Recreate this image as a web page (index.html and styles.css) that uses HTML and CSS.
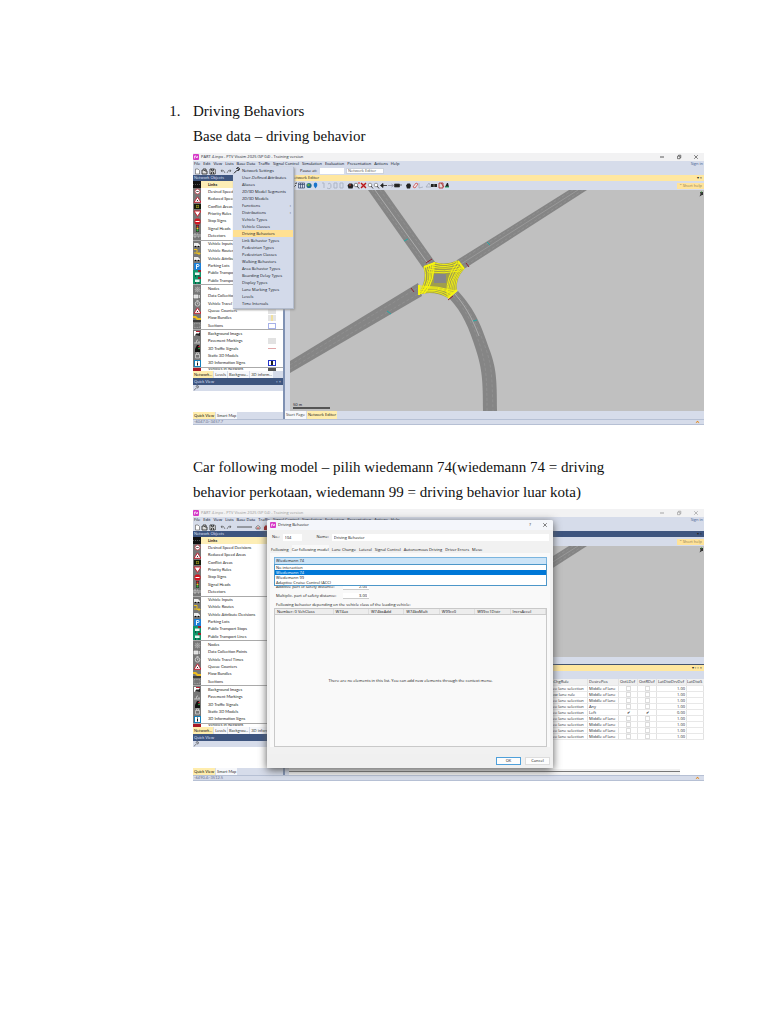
FILE: index.html
```html
<!DOCTYPE html>
<html lang="id">
<head>
<meta charset="utf-8">
<title>Driving Behaviors</title>
<link rel="stylesheet" href="styles.css">
</head>
<body>
<svg class="defs" aria-hidden="true">
  <symbol id="i-logo" viewBox="0 0 6 6"><rect width="6" height="6" rx="1" fill="#d63bc8"/><path d="M1.5 4.5V2h1.5v1.5h1.5V2" fill="none" stroke="#fff" stroke-width=".7"/></symbol>
  <symbol id="i-link" viewBox="0 0 8 7"><rect width="8" height="7" fill="#111"/><path d="M0 3.5h8" stroke="#999" stroke-width=".5" stroke-dasharray="1 1"/></symbol>
  <symbol id="i-speed" viewBox="0 0 8 7"><circle cx="4.5" cy="3.5" r="2.6" fill="#fff" stroke="#b54a52"/><path d="M3.3 3.5h2.4" stroke="#333" stroke-width=".8"/></symbol>
  <symbol id="i-tri" viewBox="0 0 8 7"><path d="M4.5 .8 8 6.300H1z" fill="#fff" stroke="#c02838"/><path d="M4 4.5h1" stroke="#333"/></symbol>
  <symbol id="i-conf" viewBox="0 0 8 7"><path d="M1 1h7v5H1z" fill="#151b0c"/><path d="M3 2h3v3H3z" fill="#aaa81c"/><path d="M3.5 2.5h2v2h-2z" fill="#262f12"/></symbol>
  <symbol id="i-yield" viewBox="0 0 8 7"><path d="M1 1h7L4.500 6.500z" fill="#fff" stroke="#c8202c"/></symbol>
  <symbol id="i-stop" viewBox="0 0 8 7"><path d="M3 .5h3l1.500 1.500v3L6 6.500H3L1.500 5V2z" fill="#d01822"/><path d="M2.500 3.500h4" stroke="#fff"/></symbol>
  <symbol id="i-signal" viewBox="0 0 8 7"><rect x="3" width="3" height="7" fill="#333"/><circle cx="4.500" cy="1.500" r="1" fill="#e02525"/><circle cx="4.500" cy="3.500" r="1" fill="#f0cf25"/><circle cx="4.500" cy="5.500" r="1" fill="#32b745"/></symbol>
  <symbol id="i-det" viewBox="0 0 8 7"><path d="M1 2h2v3H1zM4 2h1v3h1M7 2v3" fill="none" stroke="#ddd" stroke-width=".7"/></symbol>
  <symbol id="i-car" viewBox="0 0 8 7"><path d="M1 2h4l2 2v1H1z" fill="#eee"/><circle cx="2.500" cy="5.500" r=".7"/><circle cx="5.500" cy="5.500" r=".7"/></symbol>
  <symbol id="i-route" viewBox="0 0 8 7"><path d="M1 1.500h3v4h3M5.500 4l1.500 1.500L5.500 7M1 5h3" fill="none" stroke="#edc21e"/></symbol>
  <symbol id="i-park" viewBox="0 0 8 7"><rect x="1" width="7" height="7" fill="#1c7fd6"/><path d="M3.500 6V1.500H5q1 0 1 1t-1 1H3.500" fill="none" stroke="#fff" stroke-width=".9"/></symbol>
  <symbol id="i-bus" viewBox="0 0 8 7"><rect width="8" height="7" fill="#119469"/><path d="M2 2.500h4.500V5H2z" fill="#e8f5ef"/><path d="M5 0h3v2H5z" fill="#94222b"/><path d="M2 6h1M5.500 6h1" stroke="#111"/></symbol>
  <symbol id="i-node" viewBox="0 0 8 7"><path d="M2 1l5 5M7 1 2 6M1.500 3.500h6M4.500.5v6" stroke="#bbb" stroke-width=".5"/><circle cx="4.500" cy="3.500" r="2" fill="none" stroke="#bbb" stroke-width=".5"/></symbol>
  <symbol id="i-data" viewBox="0 0 8 7"><path d="M1 2h4v3H1zM6.500 2v3" fill="#ddd" stroke="#eee" stroke-width=".7"/></symbol>
  <symbol id="i-clock" viewBox="0 0 8 7"><circle cx="4.500" cy="3.800" r="2.300" fill="none" stroke="#ddd" stroke-width=".8"/><path d="M4.500 2.500v1.500h1M3.500.5h2" fill="none" stroke="#eee" stroke-width=".6"/></symbol>
  <symbol id="i-flow" viewBox="0 0 8 7"><path d="M0 1h3l2 2h3v2H4L2 3H0z" fill="#edbd20"/><path d="M0 5h8v2H0z" fill="#3b3b3b"/></symbol>
  <symbol id="i-sect" viewBox="0 0 8 7"><path d="M1 1.500h6v4H1z" fill="none" stroke="#bbb" stroke-width=".6" stroke-dasharray="1 .7"/></symbol>
  <symbol id="i-image" viewBox="0 0 8 7"><rect x="1" y="1" width="6" height="5" fill="#fff"/><path d="M1.500 5.500 4 3l1 1 2-2v4z" fill="#222"/><path d="M3 1h4v1H3z" fill="#b82030"/></symbol>
  <symbol id="i-pave" viewBox="0 0 8 7"><path d="M1 5h6M3 5l1-3h1M6 5V3" fill="none" stroke="#ddd" stroke-width=".7"/></symbol>
  <symbol id="i-3ds" viewBox="0 0 8 7"><path d="M2 7V4l2-4h2l1 4v3z" fill="#111"/><circle cx="6" cy="1.500" r=".8" fill="#e23"/><circle cx="6" cy="3.500" r=".8" fill="#3b4"/></symbol>
  <symbol id="i-static" viewBox="0 0 8 7"><path d="M2.500 2.500h4V6h-4zM3.500 2.500V.8h2v1.700" fill="none" stroke="#ddd" stroke-width=".7"/></symbol>
  <symbol id="i-info" viewBox="0 0 8 7"><rect x="1" width="7" height="7" fill="#147fb9"/><rect x="2" y="1" width="5" height="5" fill="#fff"/><path d="M4.500 1.500v1M4.500 3v2.500" stroke="#111"/></symbol>
  <symbol id="i-red" viewBox="0 0 8 7"><path d="M0 0h8v7H0z" fill="#a81a25"/></symbol>
  <symbol id="i-files" viewBox="0 0 24 7"><path d="M2.500 1h2.500l1.500 1.500V6h-4z" fill="#fff" stroke="#555" stroke-width=".6"/><path d="M9 2h2l1 1h2v3H9zM10 1h3v2" fill="#ddd" stroke="#222" stroke-width=".8"/><path d="M17 1h4.500l.7.700V6H17zM18.500 1v1.700h2V1M18.500 6V4h2v2" fill="#fff" stroke="#222" stroke-width=".8"/></symbol>
  <symbol id="i-undo" viewBox="0 0 12 7"><path d="M1 3q3-2 4 2M1 3l1-1.500M1 3l1.500.7M11 3q-3-2-4 2M11 3l-1-1.500M11 3l-1.500.7" fill="none" stroke="#444" stroke-width=".6"/></symbol>
  <symbol id="i-wrench" viewBox="0 0 7 7"><path d="M1 6.300 4 3.300M3.500 2q0-1.500 2-1.400L4.700 1.800l.7.700L6.600 1.500Q6.500 4 4.200 3.500" fill="none" stroke="#222"/></symbol>
  <symbol id="i-min" viewBox="0 0 6 6"><path d="M1 3h4" stroke="#333" stroke-width=".8"/></symbol>
  <symbol id="i-max" viewBox="0 0 6 6"><path d="M1.500 2.200h2.500v2.500H1.500zM2.500 2V1.200h2.300v2.500H4" fill="none" stroke="#333" stroke-width=".6"/></symbol>
  <symbol id="i-close" viewBox="0 0 6 6"><path d="m1.200 1.200 3.600 3.600M4.800 1.200 1.200 4.800" stroke="#333" stroke-width=".6"/></symbol>
  <symbol id="i-pin" viewBox="0 0 6 6"><path d="M2 1h3v3H4L1.500 5.500 2.500 3z" fill="#333"/><path d="M3 1h1" stroke="#3a3"/></symbol>
  <symbol id="i-up" viewBox="0 0 5 5"><path d="M0.500 2.800 2.500 1l2 1.800v1.400l-2-1.800-2 1.800z" fill="#e58a20"/></symbol>
  <symbol id="i-tools" viewBox="0 0 160 9">
    <path d="m4 7 3-3M6 3q0-1 2-1" fill="none" stroke="#222"/><path d="M9.500 2h6v5h-6zM9.500 3.500h6M11.500 2v5M13.500 2v5" fill="none" stroke="#34466a" stroke-width=".7"/>
    <circle cx="20" cy="4.500" r="2.600" fill="#1d6c8b"/><circle cx="19.500" cy="4" r="1.200" fill="#65ac42"/>
    <path d="M26.500 7.500 24.800 5V3q0-1.500 1.700-1.500t1.700 1.500v2z" fill="#1a75cc"/>
    <path d="M33 2h2v5M39 3q3-2 3 2t-4 2M45 2h3v5h-3zM51 2h3v5h-3z" fill="none" stroke="#adb5c5"/>
    <path d="M58.500 4.500 60 2.500h3l1.500 2-1 3h-4z" fill="#222"/><path d="M61 3v2" stroke="#c24332"/>
    <circle cx="67" cy="4" r="1.800" fill="#fff" stroke="#444" stroke-width=".6"/><path d="m68 5 2 2.500" stroke="#333"/><path d="M69 2h2" stroke="#d33"/>
    <rect x="72" y="2" width="5" height="5" fill="#d9c9c3"/><path d="m72 2 5 5m0-5-5 5" stroke="#b9141c" stroke-width="1.300"/>
    <circle cx="81" cy="4" r="1.800" fill="#fff" stroke="#666" stroke-width=".6"/><path d="m82 5 2 2.500" stroke="#444"/>
    <circle cx="87" cy="4" r="1.800" fill="#fff" stroke="#666" stroke-width=".6"/><path d="m88 5 2 2.500" stroke="#444"/>
    <path d="M92 4.500h6M94 2.500l-2.500 2L94 6.500z" stroke="#222" stroke-width=".8" fill="#222"/><path d="M99 4.500h5M102.500 3l2 1.500-2 1.500" stroke="#99a" fill="none"/>
    <path d="M105.500 3h5v3h-5zM110 4h3" fill="#222" stroke="#333" stroke-width=".7"/><path d="M117 4.500 118.500 2.500h2.500l1 2-1 3h-3z" fill="#222"/>
    <path d="m124 6 3-4 2 1-3 4z" fill="#eee" stroke="#c33" stroke-width=".7"/><path d="M130 2v5l4-1M137 6l3-4 2 4z" fill="none" stroke="#a2a9b7" stroke-width=".8"/>
    <path d="M142 3h6v3h-6z" fill="#222"/><path d="M145 3v3" stroke="#bbb" stroke-width=".6"/><path d="M150 2h4v5h-4zM152 2l3 4" fill="#ddd" stroke="#a22" stroke-width=".8"/><path d="m156 6 2-4h1l1 4z" fill="#222"/><path d="M156 6h4" stroke="#2a6"/>
  </symbol>
  <g id="roads">
    <g fill="#858585"><path d="M78 0h16l51 72-12 6z"/><path d="M279 0h18L174 79l-7-9z"/><path d="m0 171 128-78 4 13L0 183z"/><path d="M159 108c14 15 20 30 27 52 6 19 7 30 7 61h14c0-33-1-43-7-60-9-26-14-40-32-60z"/></g>
    <g fill="none" stroke="#a0a0a0" stroke-width=".4"><path d="m85 0 54 75" stroke="#c8c8c8" stroke-width=".6"/><path d="m82 0 54 76M90 0l52 72" stroke-dasharray="3 2"/><path d="M288 0 171 74" stroke="#b8b8b8"/><path d="M283 0 168 72M293 0 173 77" stroke-dasharray="3 2"/><path d="m0 175 129-78M0 179l130-76" stroke-dasharray="3 2"/><path d="M163 106c14 15 22 32 29 56 4 16 5 27 5 59M166 103c14 16 22 34 30 56 6 18 6 29 7 62" stroke-dasharray="3 2"/><path d="M165 104c14 16 20 32 24 42" stroke="#c8c8c8" stroke-width=".6"/></g>
    <path d="M133 77Q138 88 128 105Q143 100 158 108L167 100Q165 89 175 78L168 70Q155 76 145 72Z" fill="#a09e4c"/>
    <g fill="none" stroke="#f8f610" stroke-width=".9"><path d="M134 77q5 13-5 27M136 76q6 13-5 28M138 75q6 14-6 28M140 74q5 15-8 29M142 73q4 16-8 31M144 72q1 18-9 31"/><path d="M129 104q15-6 29 3M130 102q17-5 30 4M130 100q17-4 32 4M130 98q18-2 33 5M130 96q18 0 35 5"/><path d="M158 106q-2-13 11-33M160 105q-2-13 11-30M162 104q-2-14 10-28M164 102q-2-12 9-25M157 104q-1-17 10-32M166 101q-2-12 8-23"/><path d="M145 73q13 4 22-2M143 75q14 4 25-2M141 77q16 3 28-1M138 79q16 4 34-1M138 82q16 2 32-1"/><path d="M134 77 145 73M168 71l6 8M129 95v10M158 108l9-8" stroke-width="2"/></g>
    <path d="M144 84h12v9h-12z" fill="#85858b"/>
    <path d="m136 73 6-4M176 73l3 4M121 98l3 4M158 110l5-4" stroke="#8c2431"/><path d="m114 51 4-2M197 52l3 3M97 121l4 3M183 131l4-1" stroke="#20aaa6"/>
  </g>
</svg>

<main class="document">
  <section class="entry">
    <ol class="copy"><li>Driving Behaviors<br>Base data – driving behavior</li></ol>

    <div class="app">
      <header class="titlebar"><svg class="ic6"><use href="#i-logo"/></svg><span class="grow">PART 4.inpx - PTV Vissim 2025 (SP 04) - Training version</span><span class="winbtns"><svg class="ic6"><use href="#i-min"/></svg><svg class="ic6"><use href="#i-max"/></svg><svg class="ic6"><use href="#i-close"/></svg></span></header>
      <nav class="menubar"><button>File</button><button>Edit</button><button>View</button><button>Lists</button><button>Base Data</button><button>Traffic</button><button>Signal Control</button><button>Simulation</button><button>Evaluation</button><button>Presentation</button><button>Actions</button><button>Help</button><a href="#signin" class="signin">Sign in</a></nav>
      <div class="toolbar"><svg class="files"><use href="#i-files"/></svg><svg class="undo"><use href="#i-undo"/></svg><label class="pause">Pause at:<input type="text" aria-label="Pause at"></label><select aria-label="Window"><option>Network Editor</option></select></div>
      <div class="menu">
        <button class="first"><svg class="menu-icon"><use href="#i-wrench"/></svg>Network Settings</button><button>User-Defined Attributes</button><button>Aliases</button><button>2D/3D Model Segments</button><button>2D/3D Models</button><button>Functions<i>›</i></button><button>Distributions<i>›</i></button><button>Vehicle Types</button><button>Vehicle Classes</button><button class="active">Driving Behaviors</button><button>Link Behavior Types</button><button>Pedestrian Types</button><button>Pedestrian Classes</button><button>Walking Behaviors</button><button>Area Behavior Types</button><button>Boarding Delay Types</button><button>Display Types</button><button>Lane Marking Types</button><button>Levels</button><button>Time Intervals</button>
      </div>
      <div class="workspace">
        <aside class="side">
          <h2 class="panel-title">Network Objects</h2>
          <ul class="objects">
            <li class="selected"><svg><use href="#i-link"/></svg>Links</li><li><svg><use href="#i-speed"/></svg>Desired Speed Decisions</li><li><svg><use href="#i-tri"/></svg>Reduced Speed Areas</li><li><svg><use href="#i-conf"/></svg>Conflict Areas</li><li><svg><use href="#i-yield"/></svg>Priority Rules</li><li><svg><use href="#i-stop"/></svg>Stop Signs</li><li><svg><use href="#i-signal"/></svg>Signal Heads</li><li class="last"><svg><use href="#i-det"/></svg>Detectors</li>
            <li><svg><use href="#i-car"/></svg>Vehicle Inputs</li><li><svg><use href="#i-route"/></svg>Vehicle Routes</li><li><svg><use href="#i-car"/></svg>Vehicle Attribute Decisions</li><li><svg><use href="#i-park"/></svg>Parking Lots</li><li><svg><use href="#i-bus"/></svg>Public Transport Stops</li><li class="last"><svg><use href="#i-bus"/></svg>Public Transport Lines</li>
            <li><svg><use href="#i-node"/></svg>Nodes</li><li><svg><use href="#i-data"/></svg>Data Collection Points</li><li><svg><use href="#i-clock"/></svg>Vehicle Travel Times</li><li><svg><use href="#i-tri"/></svg>Queue Counters<b class="swatch grey"></b></li><li><svg><use href="#i-flow"/></svg>Flow Bundles<b class="swatch sand"></b></li><li class="last"><svg><use href="#i-sect"/></svg>Sections<b class="swatch box"></b></li>
            <li><svg><use href="#i-image"/></svg>Background Images</li><li><svg><use href="#i-pave"/></svg>Pavement Markings<b class="swatch grey"></b></li><li><svg><use href="#i-3ds"/></svg>3D Traffic Signals<b class="swatch line"></b></li><li><svg><use href="#i-static"/></svg>Static 3D Models</li><li class="last"><svg><use href="#i-info"/></svg>3D Information Signs<b class="swatch info"></b></li><li class="cut"><svg><use href="#i-red"/></svg>Vehicles In Network<b class="swatch dark"></b></li>
          </ul>
          <div class="tabs"><button class="on">Network...</button><button>Levels</button><button>Backgrou...</button><button>3D inform...</button></div>
          <h2 class="panel-title quick">Quick View<span>▫ ×</span></h2>
          <div class="quick-tools"><svg class="ic6"><use href="#i-wrench"/></svg></div>
          <div class="quick-body"></div>
          <div class="tabs"><button class="on">Quick View</button><button>Smart Map</button></div>
        </aside>
        <section class="editor">
          <h2 class="editor-title">Network Editor<span>▾ ×</span></h2>
          <div class="editor-tools"><svg class="tools"><use href="#i-tools"/></svg><button class="help">⌃ Short help</button></div>
          <div class="canvas"><svg class="map"><use href="#roads"/></svg><svg class="ic6 pin"><use href="#i-pin"/></svg><span class="scale">50 m</span></div>
          <div class="tabs bottom"><button>Start Page</button><button class="on">Network Editor</button></div>
        </section>
      </div>
      <footer class="status">-6047.0:-3457.7<svg class="up"><use href="#i-up"/></svg></footer>
    </div>
  </section>

  <section class="entry">
    <p class="copy">Car following model – pilih wiedemann 74(wiedemann 74 = driving<br>behavior perkotaan, wiedemann 99 = driving behavior luar kota)</p>

    <div class="app inactive">
      <header class="titlebar"><svg class="ic6"><use href="#i-logo"/></svg><span class="grow">PART 4.inpx - PTV Vissim 2025 (SP 04) - Training version</span><span class="winbtns"><svg class="ic6"><use href="#i-min"/></svg><svg class="ic6"><use href="#i-max"/></svg><svg class="ic6"><use href="#i-close"/></svg></span></header>
      <nav class="menubar"><button>File</button><button>Edit</button><button>View</button><button>Lists</button><button>Base Data</button><button>Traffic</button><button>Signal Control</button><button>Simulation</button><button>Evaluation</button><button>Presentation</button><button>Actions</button><button>Help</button><a href="#signin" class="signin">Sign in</a></nav>
      <div class="toolbar"><svg class="files"><use href="#i-files"/></svg><svg class="undo"><use href="#i-undo"/></svg><svg class="slider" viewBox="0 0 34 7"><path d="M2 3h15" stroke="#333" stroke-width=".8"/><path d="M21 5V3q2-3 4 0v2z" fill="#eee" stroke="#555" stroke-width=".7"/><path d="M23 3v2" stroke="#c33"/><path d="M29 3l2-2 2 2v3h-4z" fill="#a62025"/></svg></div>
      <div class="workspace">
        <aside class="side">
          <h2 class="panel-title">Network Objects</h2>
          <ul class="objects">
            <li class="selected"><svg><use href="#i-link"/></svg>Links</li><li><svg><use href="#i-speed"/></svg>Desired Speed Decisions</li><li><svg><use href="#i-tri"/></svg>Reduced Speed Areas</li><li><svg><use href="#i-conf"/></svg>Conflict Areas</li><li><svg><use href="#i-yield"/></svg>Priority Rules</li><li><svg><use href="#i-stop"/></svg>Stop Signs</li><li><svg><use href="#i-signal"/></svg>Signal Heads</li><li class="last"><svg><use href="#i-det"/></svg>Detectors</li>
            <li><svg><use href="#i-car"/></svg>Vehicle Inputs</li><li><svg><use href="#i-route"/></svg>Vehicle Routes</li><li><svg><use href="#i-car"/></svg>Vehicle Attribute Decisions</li><li><svg><use href="#i-park"/></svg>Parking Lots</li><li><svg><use href="#i-bus"/></svg>Public Transport Stops</li><li class="last"><svg><use href="#i-bus"/></svg>Public Transport Lines</li>
            <li><svg><use href="#i-node"/></svg>Nodes</li><li><svg><use href="#i-data"/></svg>Data Collection Points</li><li><svg><use href="#i-clock"/></svg>Vehicle Travel Times</li><li><svg><use href="#i-tri"/></svg>Queue Counters</li><li><svg><use href="#i-flow"/></svg>Flow Bundles</li><li class="last"><svg><use href="#i-sect"/></svg>Sections</li>
            <li><svg><use href="#i-image"/></svg>Background Images</li><li><svg><use href="#i-pave"/></svg>Pavement Markings</li><li><svg><use href="#i-3ds"/></svg>3D Traffic Signals</li><li><svg><use href="#i-static"/></svg>Static 3D Models</li><li class="last"><svg><use href="#i-info"/></svg>3D Information Signs</li><li class="cut"><svg><use href="#i-red"/></svg>Vehicles In Network</li>
          </ul>
          <div class="tabs"><button class="on">Network...</button><button>Levels</button><button>Backgrou...</button><button>3D inform...</button></div>
          <h2 class="panel-title quick">Quick View</h2>
          <div class="quick-tools"><svg class="ic6"><use href="#i-wrench"/></svg></div>
          <div class="quick-body"></div>
          <div class="tabs"><button class="on">Quick View</button><button>Smart Map</button></div>
        </aside>
        <section class="editor">
          <h2 class="editor-title blue"><span>▾ ×</span></h2>
          <div class="editor-tools"><button class="help">⌃ Short help</button></div>
          <div class="canvas short"><svg class="map"><use href="#roads"/></svg><svg class="ic6 pin"><use href="#i-pin"/></svg></div>
          <div class="splitter"></div>
          <h2 class="editor-title list-title"><span>▾ ▫ ▫ ×</span></h2>
          <div class="list-tools"></div>
          <div class="list-area">
            <table class="list">
              <colgroup><col class="c-rest"><col class="c-rule"><col class="c-pos"><col class="c-chk"><col class="c-chk"><col class="c-num"><col class="c-end"></colgroup>
              <thead><tr><th></th><th>LnChgRule</th><th>DesirePos</th><th>OvtLDef</th><th>OvtRDef</th><th>LatDistDrvDef</th><th>LatDistS</th></tr></thead>
              <tbody>
                <tr><td></td><td>Free lane selection</td><td>Middle of lane</td><td><input type="checkbox" aria-label="OvtLDef 1"></td><td><input type="checkbox" aria-label="OvtRDef 1"></td><td>1.00</td><td></td></tr>
                <tr><td></td><td>Slow lane rule</td><td>Middle of lane</td><td><input type="checkbox" aria-label="OvtLDef 2"></td><td><input type="checkbox" aria-label="OvtRDef 2"></td><td>1.00</td><td></td></tr>
                <tr><td></td><td>Free lane selection</td><td>Middle of lane</td><td><input type="checkbox" aria-label="OvtLDef 3"></td><td><input type="checkbox" aria-label="OvtRDef 3"></td><td>1.00</td><td></td></tr>
                <tr><td></td><td>Free lane selection</td><td>Any</td><td><input type="checkbox" aria-label="OvtLDef 4"></td><td><input type="checkbox" aria-label="OvtRDef 4"></td><td>1.00</td><td></td></tr>
                <tr><td></td><td>Free lane selection</td><td>Left</td><td><input type="checkbox" checked aria-label="OvtLDef 5"></td><td><input type="checkbox" checked aria-label="OvtRDef 5"></td><td>0.00</td><td></td></tr>
                <tr><td></td><td>Free lane selection</td><td>Middle of lane</td><td><input type="checkbox" aria-label="OvtLDef 6"></td><td><input type="checkbox" aria-label="OvtRDef 6"></td><td>1.00</td><td></td></tr>
                <tr><td></td><td>Free lane selection</td><td>Middle of lane</td><td><input type="checkbox" aria-label="OvtLDef 7"></td><td><input type="checkbox" aria-label="OvtRDef 7"></td><td>1.00</td><td></td></tr>
                <tr><td></td><td>Free lane selection</td><td>Middle of lane</td><td><input type="checkbox" aria-label="OvtLDef 8"></td><td><input type="checkbox" aria-label="OvtRDef 8"></td><td>1.00</td><td></td></tr>
                <tr><td></td><td>Free lane selection</td><td>Middle of lane</td><td><input type="checkbox" aria-label="OvtLDef 9"></td><td><input type="checkbox" aria-label="OvtRDef 9"></td><td>1.00</td><td></td></tr>
              </tbody>
            </table>
            <div class="hscroll"></div>
          </div>
        </section>
      </div>
      <footer class="status">-6490.4:-3512.5<svg class="up"><use href="#i-up"/></svg></footer>

      <div class="dialog" role="dialog" aria-label="Driving Behavior">
        <header class="dialog-title"><svg class="ic6"><use href="#i-logo"/></svg><span class="grow">Driving Behavior</span><span>?</span><svg class="ic6"><use href="#i-close"/></svg></header>
        <div class="fields"><label for="no">No.:</label><input id="no" class="no" value="104"><label for="name">Name:</label><input id="name" class="name" value="Driving Behavior"></div>
        <div class="dialog-tabs"><button>Following</button><button class="on">Car following model</button><button>Lane Change</button><button>Lateral</button><button>Signal Control</button><button>Autonomous Driving</button><button>Driver Errors</button><button>Meso</button></div>
        <div class="pane">
          <div class="combo"><select aria-label="Car following model"><option>Wiedemann 74</option></select><ul class="options"><li>No interaction</li><li class="on">Wiedemann 74</li><li>Wiedemann 99</li><li>Adaptive Cruise Control (ACC)</li></ul></div>
          <div class="param covered"><label for="add">Additive part of safety distance:</label><input id="add" value="2.00"></div>
          <div class="param"><label for="mul">Multiplic. part of safety distance:</label><input id="mul" value="3.00"></div>
          <p class="caption">Following behavior depending on the vehicle class of the leading vehicle:</p>
          <div class="class-list">
            <table><thead><tr><th class="wide">Number: 0 VehClass</th><th>W74ax</th><th>W74bxAdd</th><th>W74bxMult</th><th>W99cc0</th><th>W99cc1Distr</th><th>IncrsAccel</th></tr></thead></table>
            <p class="empty">There are no elements in this list. You can add new elements through the context menu.</p>
          </div>
        </div>
        <footer class="actions"><button class="ok">OK</button><button>Cancel</button></footer>
      </div>
    </div>
  </section>
</main>
</body>
</html>
```

FILE: styles.css
```css
* { box-sizing: border-box; }
body { margin: 0; background: #fff; color: #111; font-family: "Liberation Serif", serif; }
.defs { position: absolute; width: 0; height: 0; }
.document { padding: 99px 64px 200px 193px; }
.entry { margin-bottom: 30px; }
.copy { margin: 0 0 4px; padding: 0; font-size: 15px; line-height: 25px; white-space: nowrap; }
.copy li::marker { content: "1.\2002\2004"; }

button, input, select { margin: 0; padding: 0; border: 0; border-radius: 0; background: none; color: inherit; font: inherit; line-height: inherit; appearance: none; min-width: 0; }
button { white-space: nowrap; text-align: left; }
h2, p, ul { margin: 0; padding: 0; font: inherit; list-style: none; }
p.copy { margin-bottom: 4px; font-size: 15px; line-height: 25px; }
.grow { flex: 1; }
.ic6 { width: 6px; height: 6px; flex: none; }

/* application window */
.app { position: relative; display: flex; flex-direction: column; height: 272px; overflow: hidden; background: #d6dcea; color: #20242e; font-family: Lato, sans-serif; font-size: 4px; line-height: 6px; white-space: nowrap; }
.titlebar { display: flex; align-items: center; gap: 2px; height: 8px; padding: 0 5px 0 0; background: #f2f2f3; font-family: "Open Sans", sans-serif; }
.winbtns { display: flex; gap: 11px; }
.inactive .titlebar { color: #999; }
.inactive .winbtns { opacity: .5; }
.menubar { display: flex; gap: 3px; height: 6px; padding: 0 1px; color: #000818; font-family: "Open Sans", sans-serif; }
.signin { margin-left: auto; color: #40598c; text-decoration: none; }
.toolbar { display: flex; align-items: center; height: 8px; }
.files { width: 24px; height: 7px; }
.undo { width: 12px; height: 7px; margin-left: 3px; }
.slider { width: 36px; height: 7px; margin-left: 2px; }
.pause { display: flex; gap: 3px; margin-left: 68px; color: #111; font-family: "Open Sans", sans-serif; }
.pause input { width: 24px; height: 6px; background: #fff; }
.toolbar select { width: 38px; height: 6px; margin-left: 2px; padding-left: 1px; border: 1px solid #ccd2dd; background: #fff; color: #555; font-family: "Open Sans", sans-serif; line-height: 4px; }

.workspace { display: flex; flex: 1; min-height: 0; }
.side { display: flex; flex-direction: column; width: 92px; margin-right: 4px; border-right: 2px solid #7f91b3; flex: none; }
.panel-title { display: flex; justify-content: space-between; height: 6px; padding: 0 2px 0 1px; background: #3e557f; color: #d6dfef; }
.panel-title.quick { height: 7px; line-height: 7px; }
.objects { display: flex; flex-direction: column; flex: 1; min-height: 0; overflow: hidden; background: linear-gradient(90deg, #777 8px, #fff 8px); color: #222; }
.objects li { display: flex; align-items: center; flex: 1 1 0; min-height: 0; padding-right: 7px; }
.objects svg { width: 8px; height: 7px; margin-right: 7px; flex: none; }
.objects .last { border-bottom: 1px solid #aaa; }
.objects .selected { background: #fdeeb6; color: #111; font-weight: bold; }
.objects .cut { flex: 0 0 3px; overflow: hidden; }
.swatch { width: 8px; height: 6px; margin-left: auto; }
.grey { background: #e2e2e2; }
.sand { background: linear-gradient(90deg, #e4e4e4 3px, #f0e0a0 3px, #f0e0a0 5px, #e4e4e4 5px); }
.box { border: 1px solid #a6b1e8; }
.line { height: 1px; background: #e0a8aa; }
.info { border: 1px solid #2535c8; background: linear-gradient(90deg, #fff 2px, #222 2px, #222 4px, #fff 4px); }
.dark { background: #555; }
.tabs { display: flex; height: 7px; line-height: 7px; gap: 1px; background: #d6dcea; overflow: hidden; flex: none; }
.tabs button { padding: 0 1px; background: #f7f8fb; color: #333; }
.tabs .on { background: #ffedad; color: #111; }
.quick-tools { height: 6px; background: #d6dcea; }
.quick-tools svg { display: block; opacity: .6; }
.quick-body { height: 21px; background: #fff; }

.editor { display: flex; flex-direction: column; flex: 1; min-width: 0; }
.editor-title { display: flex; justify-content: space-between; height: 6px; padding: 0 2px; background: #ffe7a0; color: #222; font-family: "Open Sans", sans-serif; }
.editor-title span { display: block; margin-left: auto; }
.editor-title.blue { background: #3e557f; }
.editor-tools { display: flex; align-items: center; height: 9px; background: #d6dcea; }
.tools { width: 160px; height: 9px; }
.help { margin-left: auto; padding: 0 2px; background: #ffe39a; color: #8a7950; font-family: "Open Sans", sans-serif; }
.canvas { position: relative; flex: 1; min-height: 0; margin-left: 1px; background: #c0c0c0; }
.canvas.short { flex: none; height: 111px; }
.map { display: block; width: 100%; height: 100%; overflow: hidden; }
.pin { position: absolute; top: 1px; right: 0; }
.scale { position: absolute; left: 3px; bottom: 2px; width: 37px; border-bottom: 2px solid #555; line-height: 5px; }
.tabs.bottom { height: 8px; line-height: 8px; margin-left: -4px; font-family: "Open Sans", sans-serif; }
.status { display: flex; justify-content: space-between; height: 6px; padding: 0 4px 0 1px; border-top: 1px solid #b6c0d4; border-bottom: 1px solid #b6c0d4; background: #d6dcea; color: #68718a; line-height: 4px; }
.up { width: 5px; height: 4px; }

/* Base Data menu */
.menu { position: absolute; z-index: 2; left: 40px; top: 14px; display: flex; flex-direction: column; width: 61px; padding-bottom: 1px; background: #d3daea; border-right: 1px solid #b3bccd; border-bottom: 1px solid #b3bccd; box-shadow: 1px 1px 2px #999; font-family: "Open Sans", sans-serif; line-height: 7px; }
.menu button { display: flex; justify-content: space-between; height: 7px; padding: 0 2px 0 9px; color: #0d1220; }
.menu .first { justify-content: flex-start; padding-left: 0; }
.menu-icon { width: 7px; height: 7px; margin-right: 2px; }
.menu .active { background: #ffe092; }
.menu i { font-style: normal; }

/* behaviour list */
.splitter { height: 7px; background: #d6dcea; }
.list-title { height: 7px; border-top: 1px solid #44546f; }
.list-tools { height: 8px; background: #d6dcea; }
.list-area { display: flex; flex-direction: column; justify-content: space-between; flex: 1; min-height: 0; background: #fff; font-family: "Open Sans", sans-serif; }
.list { width: 100%; table-layout: fixed; border-collapse: collapse; }
.list th, .list td { height: 6px; padding: 0 1px; overflow: hidden; font-weight: normal; text-align: left; line-height: 5px; border-right: 1px solid #e2e2e2; border-bottom: 1px solid #e8e8e8; }
.list th { background: #f0f0f0; }
.list th:last-child { padding: 0; border-right: 0; }
.list td:nth-child(4), .list td:nth-child(5) { text-align: center; }
.list td:nth-child(6) { text-align: right; }
.c-rule { width: 40px; }
.c-pos { width: 31px; }
.c-chk { width: 19px; }
.c-num { width: 30px; }
.c-end { width: 17px; }
.list input { display: block; width: 5px; height: 5px; margin: 0 auto; border: 1px solid #ddd; background: #fff; }
.list input:checked { border-color: transparent; }
.list input:checked::after { content: "✔"; display: block; line-height: 3px; color: #111; }
.hscroll { height: 6px; margin-right: 24px; background: linear-gradient(#f1f1f1 2px, #777 2px, #777 3px, #f1f1f1 3px); }

/* Driving Behavior dialog */
.dialog { position: absolute; z-index: 3; left: 74px; top: 11px; display: flex; flex-direction: column; width: 286px; height: 248px; border-radius: 2px; background: #f1f1f1; color: #111; box-shadow: 0 2px 8px #555; font-family: "Open Sans", sans-serif; }
.dialog-title { display: flex; align-items: center; gap: 2px; height: 10px; padding: 0 5px 0 3px; border-radius: 2px 2px 0 0; background: #f4f6fb; }
.dialog-title .grow { margin-right: 4px; }
.dialog-title .ic6:last-child { margin-left: 9px; }
.fields { display: flex; align-items: center; gap: 3px; height: 8px; margin: 3px 4px 5px 5px; }
.fields input { height: 7px; padding: 0 2px; background: #fff; }
.no { width: 19px; margin-right: 12px; }
.fields .name { flex: 1; }
.dialog-tabs { display: flex; gap: 3px; height: 7px; padding: 0 4px; line-height: 7px; }
.dialog-tabs .on { margin-top: -1px; background: #f9f9f9; }
.pane { display: flex; flex-direction: column; flex: 1; min-height: 0; margin: 0 3px 7px; padding: 4px 3px 0 4px; background: #f9f9f9; }
.combo { position: relative; }
.combo select { display: block; width: 100%; height: 8px; padding: 0 1px; border: 1px solid #7bb5df; background: #cce4f7; line-height: 6px; }
.options { position: absolute; z-index: 1; top: 7px; left: 0; right: 0; border: 1px solid #4d97c9; background: #fff; line-height: 5px; }
.options li { padding-left: 1px; }
.options .on { background: #0078d7; color: #fff; }
.param { display: flex; align-items: center; gap: 3px; height: 8px; margin-top: 1px; padding-left: 2px; }
.param label { width: 64px; }
.param input { width: 26px; height: 6px; padding-right: 2px; border-bottom: 1px solid #ccc; background: #fff; text-align: right; }
.param.covered { margin-top: 18px; }
.caption { margin-top: 2px; padding-left: 2px; }
.class-list { display: flex; flex-direction: column; flex: 1; border: 1px solid #c9c9c9; background: #f9f9f9; }
.class-list table { width: 100%; table-layout: fixed; border-collapse: collapse; background: #ededed; }
.class-list th { padding: 0 2px; border-right: 1px solid #ddd; border-bottom: 1px solid #ccc; font-weight: normal; text-align: left; line-height: 5px; }
.class-list .wide { width: 58px; }
.empty { margin: auto; }
.actions { display: flex; align-items: center; justify-content: flex-end; gap: 4px; height: 14px; padding-right: 3px; background: #f0f0f0; }
.actions button { width: 25px; height: 8px; border: 1px solid #ddd; background: #fdfdfd; text-align: center; }
.actions .ok { border-color: #4fa0da; }
```
